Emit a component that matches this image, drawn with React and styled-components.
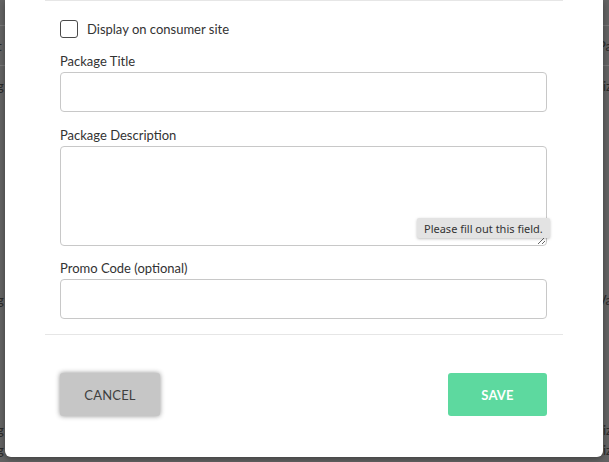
import React from "react";
import styled, { createGlobalStyle } from "styled-components";

const Global = createGlobalStyle`
  html, body { margin: 0; padding: 0; }
  body {
    width: 609px; height: 462px; overflow: hidden;
    background: #616161;
    font-family: Lato, "Open Sans", Arial, sans-serif;
  }
  #root { width: 609px; height: 462px; }
`;

const Page = styled.div`
  position: relative;
  width: 609px;
  height: 462px;
  overflow: hidden;
  background: #636363;
`;

const BgTable = styled.div`
  display: flex;
  flex-direction: column;
  padding-top: 25px;
`;

const BgRow = styled.div`
  height: ${(p) => p.h}px;
  border-top: ${(p) => (p.line ? "1px solid #787878" : "none")};
  display: flex;
  align-items: center;
  justify-content: space-between;
  box-sizing: border-box;
  font-size: 13px;
  color: #2a2a2a;
`;

const BgLeft = styled.span`
  margin-left: -3px;
`;

const BgRight = styled.span`
  margin-right: -3px;
`;

const Modal = styled.div`
  position: absolute;
  left: 5px;
  top: 0;
  width: 598px;
  height: 457px;
  background: #fff;
  border-radius: 0 0 6px 6px;
  box-shadow: 0 2px 6px rgba(0, 0, 0, 0.35);
  display: flex;
  flex-direction: column;
  padding: 0 40px;
  box-sizing: border-box;
`;

const Body = styled.div`
  border-top: 1px solid #e6e6e6;
  border-bottom: 1px solid #e6e6e6;
  padding: 19px 16px 15px 15px;
  display: flex;
  flex-direction: column;
`;

const CheckRow = styled.label`
  display: flex;
  align-items: center;
  gap: 9px;
  font-size: 13px;
  color: #333;
  height: 18px;
  margin-bottom: 15px;
`;

const Box = styled.span`
  width: 16px;
  height: 16px;
  border: 1px solid #4a4a4a;
  border-radius: 3px;
  background: #fff;
`;

const Group = styled.div`
  display: flex;
  flex-direction: column;
  margin-bottom: ${(p) => p.mb ?? 15}px;
  position: relative;
`;

const Label = styled.div`
  font-size: 13px;
  line-height: 16px;
  color: #333;
  margin-bottom: 3px;
`;

const Input = styled.div`
  height: 38px;
  border: 1px solid #c8c8c8;
  border-radius: 4px;
  background: #fff;
`;

const TextArea = styled.textarea`
  height: 100px;
  border: 1px solid #c8c8c8;
  border-radius: 4px;
  background: #fff;
  box-sizing: border-box;
  margin: 0;
  padding: 0;
  outline: none;
  resize: vertical;
  display: block;
  width: 100%;
`;

const Tooltip = styled.div`
  position: absolute;
  left: 357px;
  top: 91px;
  height: 20px;
  padding: 0 7px;
  display: flex;
  align-items: center;
  background: #e3e3e3;
  border-radius: 2px;
  box-shadow: 0 1px 3px rgba(0, 0, 0, 0.25);
  font-size: 11px;
  color: #333;
  font-family: "Noto Sans", Lato, sans-serif;
  white-space: nowrap;
`;

const Footer = styled.div`
  display: flex;
  justify-content: space-between;
  padding: 38px 16px 0 15px;
`;

const Button = styled.div`
  width: ${(p) => (p.primary ? 99 : 100)}px;
  height: 43px;
  border-radius: 3px;
  display: flex;
  align-items: center;
  justify-content: center;
  font-size: 13px;
  letter-spacing: 0.2px;
  background: ${(p) => (p.primary ? "#5dd99f" : "#c6c6c6")};
  color: ${(p) => (p.primary ? "#fff" : "#3f3f3f")};
  font-weight: ${(p) => (p.primary ? 700 : 400)};
  box-shadow: ${(p) => (p.primary ? "none" : "0 0 5px rgba(0,0,0,0.45)")};
`;

export default function App() {
  const rows = [
    { h: 40, line: true, l: "t", r: "Pa" },
    { h: 40, line: true, l: "g", r: "iz" },
    { h: 185, l: "", r: "" },
    { h: 20, l: "g", r: "Va" },
    { h: 110, l: "", r: "" },
    { h: 20, l: "g", r: "iz" },
    { h: 20, l: "g", r: "iz" },
  ];
  return (
    <Page>
      <Global />
      <BgTable>
        {rows.map((r, i) => (
          <BgRow key={i} h={r.h} line={r.line}>
            <BgLeft>{r.l}</BgLeft>
            <BgRight>{r.r}</BgRight>
          </BgRow>
        ))}
      </BgTable>
      <Modal>
        <Body>
          <CheckRow>
            <Box />
            Display on consumer site
          </CheckRow>
          <Group>
            <Label>Package Title</Label>
            <Input />
          </Group>
          <Group mb={14}>
            <Label>Package Description</Label>
            <TextArea />
            <Tooltip>Please fill out this field.</Tooltip>
          </Group>
          <Group mb={0}>
            <Label>Promo Code (optional)</Label>
            <Input />
          </Group>
        </Body>
        <Footer>
          <Button>CANCEL</Button>
          <Button primary>SAVE</Button>
        </Footer>
      </Modal>
    </Page>
  );
}
